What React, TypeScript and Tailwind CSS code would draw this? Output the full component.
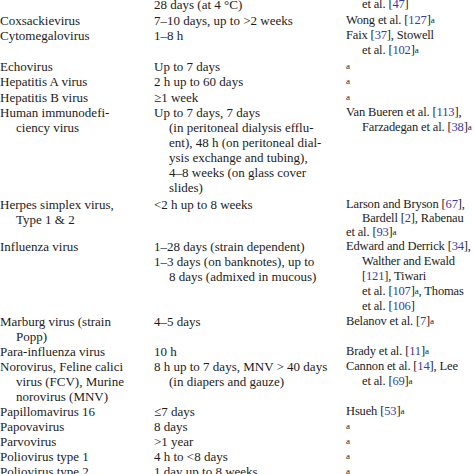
import React from 'react';

type LineProps = { indent?: boolean; children?: React.ReactNode };

const Line: React.FC<LineProps> = ({ indent, children }) => (
  <div className={`whitespace-nowrap ${indent ? 'pl-4' : ''}`}>{children}</div>
);

const L2: React.FC<LineProps> = ({ indent, children }) => (
  <div className={`whitespace-nowrap ${indent ? 'pl-[15px]' : ''}`}>{children}</div>
);

const R: React.FC<{ n: string }> = ({ n }) => (
  <>
    [<span className="text-[#3a3aa6]">{n}</span>]
  </>
);

const A: React.FC = () => <sup className="text-[9px] relative -top-[1px]">a</sup>;

const Row: React.FC<{
  a?: React.ReactNode;
  b?: React.ReactNode;
  c?: React.ReactNode;
  className?: string;
  cClass?: string;
}> = ({ a, b, c, className = '', cClass = '' }) => (
  <div className={`grid grid-cols-[154px_192px_1fr] ${className}`}>
    <div>{a}</div>
    <div>{b}</div>
    <div className={`text-[12.5px] tracking-[-0.15px] ${cClass}`}>{c}</div>
  </div>
);

const App: React.FC = () => {
  return (
    <div
      className="w-[474px] h-[474px] overflow-hidden bg-white text-[#1c1c1c] text-[13px] leading-[15px]"
      style={{ fontFamily: '"Liberation Serif", "Times New Roman", serif' }}
    >
      <div className="-mt-[3px]">
        <Row b={<L2>28 days (at 4 °C)</L2>} c={<Line indent>et al. <R n="47" /></Line>} />
        <Row
          className="pt-[1px]"
          a={<Line>Coxsackievirus</Line>}
          b={<L2>7–10 days, up to &gt;2 weeks</L2>}
          c={<Line>Wong et al. <R n="127" /><A /></Line>}
        />
        <Row
          a={<Line>Cytomegalovirus</Line>}
          b={<L2>1–8 h</L2>}
          c={
            <>
              <Line>Faix <R n="37" />, Stowell</Line>
              <Line indent>et al. <R n="102" /><A /></Line>
            </>
          }
        />
        <Row className="pt-[1px]" a={<Line>Echovirus</Line>} b={<L2>Up to 7 days</L2>} c={<Line><A /></Line>} />
        <Row a={<Line>Hepatitis A virus</Line>} b={<L2>2 h up to 60 days</L2>} c={<Line><A /></Line>} />
        <Row className="pt-[1px]" a={<Line>Hepatitis B virus</Line>} b={<L2>≥1 week</L2>} c={<Line><A /></Line>} />
        <Row
          className="pb-[2px]"
          a={
            <>
              <Line>Human immunodefi-</Line>
              <Line indent>ciency virus</Line>
            </>
          }
          b={
            <>
              <L2>Up to 7 days, 7 days</L2>
              <L2 indent>(in peritoneal dialysis efflu-</L2>
              <L2 indent>ent), 48 h (on peritoneal dial-</L2>
              <L2 indent>ysis exchange and tubing),</L2>
              <L2 indent>4–8 weeks (on glass cover</L2>
              <L2 indent>slides)</L2>
            </>
          }
          c={
            <>
              <Line>Van Bueren et al. <R n="113" />,</Line>
              <Line indent>Farzadegan et al. <R n="38" /><A /></Line>
            </>
          }
        />
        <Row
          cClass="leading-[14px]"
          a={
            <>
              <Line>Herpes simplex virus,</Line>
              <Line indent>Type 1 &amp; 2</Line>
            </>
          }
          b={<L2>&lt;2 h up to 8 weeks</L2>}
          c={
            <>
              <Line>Larson and Bryson <R n="67" />,</Line>
              <Line indent>Bardell <R n="2" />, Rabenau</Line>
              <Line>et al. <R n="93" /><A /></Line>
            </>
          }
        />
        <Row
          a={<Line>Influenza virus</Line>}
          b={
            <>
              <L2>1–28 days (strain dependent)</L2>
              <L2>1–3 days (on banknotes), up to</L2>
              <L2 indent>8 days (admixed in mucous)</L2>
            </>
          }
          c={
            <>
              <Line>Edward and Derrick <R n="34" />,</Line>
              <Line indent>Walther and Ewald</Line>
              <Line indent><R n="121" />, Tiwari</Line>
              <Line indent>et al. <R n="107" /><A />, Thomas</Line>
              <Line indent>et al. <R n="106" /></Line>
            </>
          }
        />
        <Row
          a={
            <>
              <Line>Marburg virus (strain</Line>
              <Line indent>Popp)</Line>
            </>
          }
          b={<L2>4–5 days</L2>}
          c={<Line>Belanov et al. <R n="7" /><A /></Line>}
        />
        <Row a={<Line>Para-influenza virus</Line>} b={<L2>10 h</L2>} c={<Line>Brady et al. <R n="11" /><A /></Line>} />
        <Row
          a={
            <>
              <Line>Norovirus, Feline calici</Line>
              <Line indent>virus (FCV), Murine</Line>
              <Line indent>norovirus (MNV)</Line>
            </>
          }
          b={
            <>
              <L2>8 h up to 7 days, MNV &gt; 40 days</L2>
              <L2 indent>(in diapers and gauze)</L2>
            </>
          }
          c={
            <>
              <Line>Cannon et al. <R n="14" />, Lee</Line>
              <Line indent>et al. <R n="69" /><A /></Line>
            </>
          }
        />
        <Row a={<Line>Papillomavirus 16</Line>} b={<L2>≤7 days</L2>} c={<Line>Hsueh <R n="53" /><A /></Line>} />
        <Row a={<Line>Papovavirus</Line>} b={<L2>8 days</L2>} c={<Line><A /></Line>} />
        <Row a={<Line>Parvovirus</Line>} b={<L2>&gt;1 year</L2>} c={<Line><A /></Line>} />
        <Row a={<Line>Poliovirus type 1</Line>} b={<L2>4 h to &lt;8 days</L2>} c={<Line><A /></Line>} />
        <Row a={<Line>Poliovirus type 2</Line>} b={<L2>1 day up to 8 weeks</L2>} c={<Line><A /></Line>} />
      </div>
    </div>
  );
};

export default App;
